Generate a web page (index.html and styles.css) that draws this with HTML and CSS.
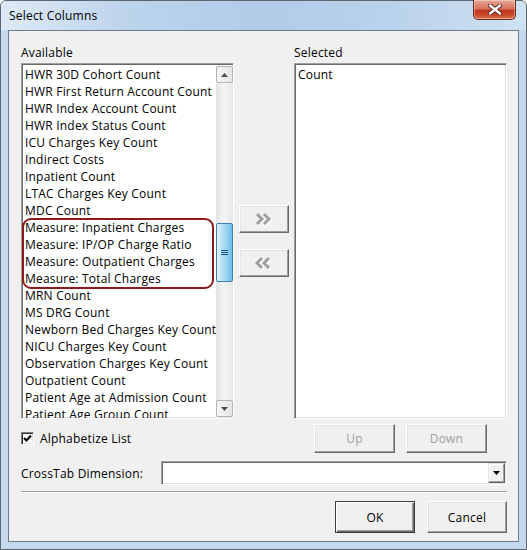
FILE: index.html
```html
<!DOCTYPE html>
<html lang="en">
<head>
    <meta charset="UTF-8">
    <title>Select Columns</title>
    <link rel="stylesheet" href="styles.css">
</head>
<body>

    <div class="window">
        <div class="titlebar">
            <span class="title">Select Columns</span>
            <button class="close-btn" title="Close">
                <svg width="14" height="11" viewBox="0 0 14 11">
                    <path d="M2 1.5 L12 9.5 M12 1.5 L2 9.5" stroke="#5a2a22" stroke-width="4.4" stroke-linecap="round"/>
                    <path d="M2 1.5 L12 9.5 M12 1.5 L2 9.5" stroke="#ffffff" stroke-width="2.4" stroke-linecap="round"/>
                </svg>
            </button>
        </div>

        <div class="client">
            <div class="columns">
                <div class="col-label">Available</div>
                <div></div>
                <div class="col-label">Selected</div>

                <div class="listbox">
                    <ul class="items">
                        <li>HWR 30D Cohort Count</li>
                        <li>HWR First Return Account Count</li>
                        <li>HWR Index Account Count</li>
                        <li>HWR Index Status Count</li>
                        <li>ICU Charges Key Count</li>
                        <li>Indirect Costs</li>
                        <li>Inpatient Count</li>
                        <li>LTAC Charges Key Count</li>
                        <li>MDC Count</li>
                        <li>Measure: Inpatient Charges</li>
                        <li>Measure: IP/OP Charge Ratio</li>
                        <li>Measure: Outpatient Charges</li>
                        <li>Measure: Total Charges</li>
                        <li>MRN Count</li>
                        <li>MS DRG Count</li>
                        <li>Newborn Bed Charges Key Count</li>
                        <li>NICU Charges Key Count</li>
                        <li>Observation Charges Key Count</li>
                        <li>Outpatient Count</li>
                        <li>Patient Age at Admission Count</li>
                        <li>Patient Age Group Count</li>
                    </ul>
                    <div class="scrollbar">
                        <div class="scroll-arrow">
                            <svg width="7" height="4" viewBox="0 0 7 4"><path d="M0 4 L3.5 0 L7 4 Z" fill="#4d4d4d"/></svg>
                        </div>
                        <div class="scroll-track">
                            <div class="scroll-thumb">
                                <svg width="7" height="5" viewBox="0 0 7 5"><path d="M0 0.5 H7 M0 2.5 H7 M0 4.5 H7" stroke="#1c4f7c" stroke-width="1"/></svg>
                            </div>
                        </div>
                        <div class="scroll-arrow">
                            <svg width="7" height="4" viewBox="0 0 7 4"><path d="M0 0 L7 0 L3.5 4 Z" fill="#4d4d4d"/></svg>
                        </div>
                    </div>
                    <div class="highlight"></div>
                </div>

                <div class="move-buttons">
                    <button class="classic-btn move-btn">
                        <svg width="18" height="14" viewBox="0 0 18 14">
                            <path d="M2 2 L7 7 L2 12 M9 2 L14 7 L9 12" fill="none" stroke="#ffffff" stroke-width="3" transform="translate(1 1)"/>
                            <path d="M2 2 L7 7 L2 12 M9 2 L14 7 L9 12" fill="none" stroke="#a0a0a0" stroke-width="3"/>
                        </svg>
                    </button>
                    <button class="classic-btn move-btn">
                        <svg width="18" height="14" viewBox="0 0 18 14">
                            <path d="M7 2 L2 7 L7 12 M14 2 L9 7 L14 12" fill="none" stroke="#ffffff" stroke-width="3" transform="translate(1 1)"/>
                            <path d="M7 2 L2 7 L7 12 M14 2 L9 7 L14 12" fill="none" stroke="#a0a0a0" stroke-width="3"/>
                        </svg>
                    </button>
                </div>

                <div class="listbox">
                    <ul class="items">
                        <li>Count</li>
                    </ul>
                </div>

                <label class="check-row">
                    <span class="checkbox">
                        <svg width="9" height="9" viewBox="0 0 9 9"><path d="M1 4 L3.5 6.5 L8 1.5" fill="none" stroke="#000" stroke-width="2"/></svg>
                    </span>
                    Alphabetize List
                </label>
                <div></div>
                <div class="order-buttons">
                    <button class="classic-btn order-btn" disabled>Up</button>
                    <button class="classic-btn order-btn" disabled>Down</button>
                </div>
            </div>

            <div class="crosstab-row">
                <span class="crosstab-label">CrossTab Dimension:</span>
                <div class="combo">
                    <span class="combo-value"></span>
                    <span class="combo-drop">
                        <svg width="7" height="4" viewBox="0 0 7 4"><path d="M0 0 L7 0 L3.5 4 Z" fill="#000"/></svg>
                    </span>
                </div>
            </div>

            <div class="separator"></div>

            <div class="dialog-buttons">
                <button class="classic-btn dialog-btn default-btn">OK</button>
                <button class="classic-btn dialog-btn">Cancel</button>
            </div>
        </div>
    </div>

</body>
</html>
```

FILE: styles.css
```css
body {
    margin: 0;
    background: #ffffff;
    font-family: "Open Sans", "Noto Sans", sans-serif;
    font-size: 12px;
    letter-spacing: 0.2px;
    color: #000;
}
.window {
    width: 527px;
    height: 550px;
    box-sizing: border-box;
    border: 1px solid #5d6670;
    border-radius: 6px 6px 0 0;
    background: #c4d8ee;
    padding: 0 7px 7px 7px;
    display: flex;
    flex-direction: column;
}
.titlebar {
    height: 29px;
    margin: 0 -7px;
    padding: 0 10px 0 8px;
    display: flex;
    align-items: flex-start;
    background: linear-gradient(90deg, #dde9f6 0%, #bcd3ec 25%, #b2cbe7 50%, #bad2eb 75%, #d0e1f2 100%);
    border-radius: 5px 5px 0 0;
}
.title {
    margin-top: 7px;
    line-height: 16px;
}
.close-btn {
    margin-left: auto;
    margin-top: -1px;
    width: 43px;
    height: 20px;
    padding: 0;
    border: 1px solid #6d2b20;
    border-top: none;
    border-radius: 0 0 5px 5px;
    background: linear-gradient(180deg, #e9a797 0%, #d8735c 45%, #c2371b 55%, #c9482a 80%, #dd7a55 100%);
    box-shadow: inset 0 0 0 1px rgba(255, 255, 255, 0.35);
    display: flex;
    justify-content: center;
    align-items: center;
}
.client {
    flex: 1;
    border: 1px solid #6e7b8b;
    background: #f0f0f0;
    padding: 13px 11px 0 12px;
}
.columns {
    display: grid;
    grid-template-columns: 213px 60px 213px;
}
.col-label {
    line-height: 17px;
    margin-bottom: 2px;
}
.listbox {
    position: relative;
    height: 356px;
    box-sizing: border-box;
    background: white;
    border: 1px solid;
    border-color: #a0a0a0 #ffffff #ffffff #a0a0a0;
    box-shadow: inset 1px 1px 0 #696969, inset -1px -1px 0 #e3e3e3;
    display: flex;
    overflow: hidden;
}
.items {
    flex: 1;
    min-width: 0;
    list-style: none;
    margin: 0;
    padding: 2px 0 0 3px;
}
.items li {
    height: 17px;
    line-height: 17px;
    white-space: nowrap;
    overflow: hidden;
}
.scrollbar {
    width: 17px;
    margin: 2px 0 1px 0;
    display: flex;
    flex-direction: column;
    background: linear-gradient(90deg, #e3e3e3 0%, #f2f2f2 40%, #f2f2f2 60%, #e6e6e6 100%);
}
.scroll-arrow {
    height: 17px;
    box-sizing: border-box;
    border: 1px solid #b4b4b4;
    border-radius: 2px;
    background: linear-gradient(90deg, #f6f6f6, #e4e4e4);
    display: flex;
    justify-content: center;
    align-items: center;
}
.scroll-track {
    flex: 1;
}
.scroll-thumb {
    margin-top: 140px;
    height: 59px;
    box-sizing: border-box;
    border: 1px solid #3c7fb1;
    border-radius: 2px;
    background: linear-gradient(90deg, #e3f4fc 0%, #b6e0f6 35%, #9fd5f3 60%, #6cbce8 100%);
    display: flex;
    justify-content: center;
    align-items: center;
}
.highlight {
    position: absolute;
    left: 0;
    top: 154px;
    width: 192px;
    height: 71px;
    box-sizing: border-box;
    border: 2px solid #8a1a1c;
    border-radius: 9px;
}
.move-buttons {
    display: flex;
    flex-direction: column;
    justify-content: center;
    align-items: center;
    gap: 16px;
}
.classic-btn {
    font-family: inherit;
    font-size: 12px;
    letter-spacing: inherit;
    color: #000;
    padding: 0;
    background: #f0f0f0;
    border: 1px solid;
    border-color: #ffffff #696969 #696969 #ffffff;
    box-shadow: inset -1px -1px 0 #a0a0a0, inset 1px 1px 0 #e3e3e3;
}
.move-btn {
    width: 50px;
    height: 28px;
    display: flex;
    justify-content: center;
    align-items: center;
}
.check-row {
    margin-top: 5px;
    display: flex;
    align-items: center;
    gap: 6px;
}
.checkbox {
    width: 13px;
    height: 13px;
    box-sizing: border-box;
    background: white;
    border: 1px solid;
    border-color: #808080 #ffffff #ffffff #808080;
    box-shadow: inset 1px 1px 0 #303030, inset -1px -1px 0 #e3e3e3;
    display: flex;
    justify-content: center;
    align-items: center;
}
.order-buttons {
    margin-top: 5px;
    display: flex;
    justify-content: center;
    gap: 11px;
}
.order-btn {
    width: 81px;
    height: 29px;
    color: #a0a0a0;
}
.crosstab-row {
    margin-top: 8px;
    display: flex;
    align-items: center;
}
.crosstab-label {
    width: 140px;
}
.combo {
    flex: 1;
    height: 24px;
    box-sizing: border-box;
    background: white;
    border: 1px solid;
    border-color: #a0a0a0 #ffffff #ffffff #a0a0a0;
    box-shadow: inset 1px 1px 0 #696969, inset -1px -1px 0 #e3e3e3;
    display: flex;
    padding: 1px;
}
.combo-value {
    flex: 1;
}
.combo-drop {
    width: 17px;
    box-sizing: border-box;
    background: #f0f0f0;
    border: 1px solid;
    border-color: #e3e3e3 #696969 #696969 #e3e3e3;
    box-shadow: inset -1px -1px 0 #a0a0a0, inset 1px 1px 0 #ffffff;
    display: flex;
    justify-content: center;
    align-items: center;
}
.separator {
    margin-top: 6px;
    height: 1px;
    background: #a0a0a0;
    border-bottom: 1px solid #ffffff;
}
.dialog-buttons {
    margin-top: 8px;
    display: flex;
    justify-content: flex-end;
    gap: 12px;
}
.dialog-btn {
    width: 80px;
    height: 32px;
}
.default-btn {
    border: 1px solid #3c3c3c;
    box-shadow: inset 1px 1px 0 #ffffff, inset -1px -1px 0 #696969, inset -2px -2px 0 #a0a0a0;
}
```
